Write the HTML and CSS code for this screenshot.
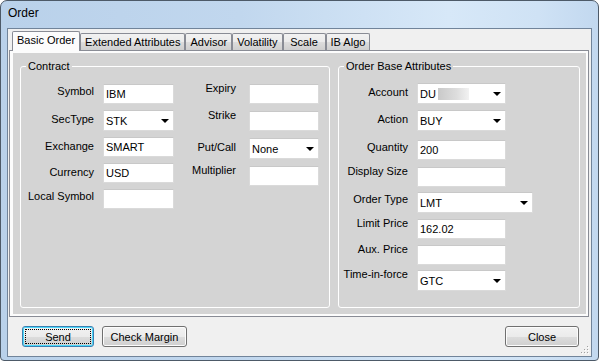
FILE: index.html
```html
<!DOCTYPE html>
<html lang="en">
<head>
  <meta charset="UTF-8">
  <title>Order</title>
  <link rel="stylesheet" href="styles.css">
</head>
<body>

  <div class="window">
    <div class="titlebar">Order</div>

    <div class="client">
      <div class="tabs">
        <div class="tab active">Basic Order</div>
        <div class="tab">Extended Attributes</div>
        <div class="tab">Advisor</div>
        <div class="tab">Volatility</div>
        <div class="tab">Scale</div>
        <div class="tab">IB Algo</div>
      </div>

      <div class="page">
        <div class="panel">

          <fieldset class="group contract">
            <legend>Contract</legend>
            <div class="contract-body">
              <div class="col-a">
                <div class="lbl">Symbol</div>
                <div class="box">IBM</div>
                <div class="lbl low">SecType</div>
                <div class="box combo">STK</div>
                <div class="lbl low">Exchange</div>
                <div class="box">SMART</div>
                <div class="lbl low">Currency</div>
                <div class="box">USD</div>
                <div class="lbl">Local Symbol</div>
                <div class="box"></div>
              </div>
              <div class="col-b">
                <div class="lbl high">Expiry</div>
                <div class="box"></div>
                <div class="lbl high">Strike</div>
                <div class="box"></div>
                <div class="lbl low">Put/Call</div>
                <div class="box combo">None</div>
                <div class="lbl high">Multiplier</div>
                <div class="box"></div>
              </div>
            </div>
          </fieldset>

          <fieldset class="group order-base">
            <legend>Order Base Attributes</legend>
            <div class="ob-body">
              <div class="lbl low">Account</div>
              <div class="box combo short"><span>DU<span class="redacted"></span></span></div>
              <div class="lbl low">Action</div>
              <div class="box combo short">BUY</div>
              <div class="lbl">Quantity</div>
              <div class="box short">200</div>
              <div class="lbl high">Display Size</div>
              <div class="box short"></div>
              <div class="lbl">Order Type</div>
              <div class="box combo">LMT</div>
              <div class="lbl high">Limit Price</div>
              <div class="box short">162.02</div>
              <div class="lbl high">Aux. Price</div>
              <div class="box short"></div>
              <div class="lbl high">Time-in-force</div>
              <div class="box combo short">GTC</div>
            </div>
          </fieldset>

        </div>
      </div>

      <div class="actions">
        <button class="btn send default">Send</button>
        <button class="btn check">Check Margin</button>
        <button class="btn close">Close</button>
      </div>

      <svg class="grip" width="10" height="10" viewBox="0 0 10 10">
        <rect x="8" y="2" width="1" height="1" fill="#fff"/>
        <rect x="7" y="1" width="1" height="1" fill="#a0a0a0"/>
        <rect x="8" y="5" width="1" height="1" fill="#fff"/>
        <rect x="7" y="4" width="1" height="1" fill="#a0a0a0"/>
        <rect x="5" y="5" width="1" height="1" fill="#fff"/>
        <rect x="4" y="4" width="1" height="1" fill="#a0a0a0"/>
        <rect x="8" y="8" width="1" height="1" fill="#fff"/>
        <rect x="7" y="7" width="1" height="1" fill="#a0a0a0"/>
        <rect x="5" y="8" width="1" height="1" fill="#fff"/>
        <rect x="4" y="7" width="1" height="1" fill="#a0a0a0"/>
        <rect x="2" y="8" width="1" height="1" fill="#fff"/>
        <rect x="1" y="7" width="1" height="1" fill="#a0a0a0"/>
      </svg>
    </div>
  </div>

</body>
</html>
```

FILE: styles.css
```css
* {
  margin: 0;
  padding: 0;
  box-sizing: border-box;
}

body {
  width: 599px;
  height: 361px;
  overflow: hidden;
  background: #fff;
  font-family: "Liberation Sans", Arial, sans-serif;
  font-size: 11px;
  color: #000;
}

/* window frame */
.window {
  width: 599px;
  height: 361px;
  border: 1px solid #4d5a68;
  border-radius: 7px 7px 4px 4px;
  background: linear-gradient(90deg, #b9d1ea 0%, #c1d7ee 40%, #d7e8f8 75%, #cfe2f5 90%, #c2d8ef 100%);
  display: flex;
  flex-direction: column;
  padding: 0 6px 3px;
}

.titlebar {
  height: 27px;
  padding: 5px 0 0 1px;
  font-size: 12px;
  line-height: 15px;
}

.client {
  flex: 1;
  position: relative;
  border: 1px solid #71849a;
  background: #f0f0f0;
  display: flex;
  flex-direction: column;
}

/* tabs */
.tabs {
  display: flex;
  align-items: flex-end;
  height: 21px;
  padding-left: 4px;
}

.tab {
  height: 17px;
  min-width: 43px;
  padding: 2px 4px 0;
  line-height: 13px;
  text-align: center;
  white-space: nowrap;
  border: 1px solid #898c95;
  border-bottom: none;
  border-radius: 2px 2px 0 0;
  background: linear-gradient(#f2f2f2, #ebebeb 50%, #dddddd 50%, #cfcfcf);
}

.tab.active {
  height: 20px;
  margin-bottom: -1px;
  position: relative;
  z-index: 1;
  background: #fcfcfc;
}

.page {
  margin-left: 1px;
  width: 580px;
  height: 267px;
  border: 1px solid #898c95;
  background: #fcfcfc;
  padding: 2px 2px 2px 3px;
}

.panel {
  height: 100%;
  background: #d4d4d4;
  display: flex;
  gap: 8px;
  padding: 7px 6px 6px 7px;
}

/* group boxes */
.group {
  border: 1px solid #fff;
  border-radius: 3px;
  min-width: 0;
}

.group legend {
  margin-left: 5px;
  padding: 0 2px;
  line-height: 13px;
}

.contract {
  width: 310px;
}

.order-base {
  flex: 1;
}

.contract-body {
  display: flex;
  padding-top: 11px;
}

.col-a {
  display: grid;
  grid-template-columns: 73px 71px;
  grid-template-rows: 26px 27px 26px 26px 20px;
  column-gap: 9px;
}

.col-b {
  display: grid;
  grid-template-columns: 62px 70px;
  grid-template-rows: 27px 27px 28px 20px;
  column-gap: 13px;
}

.ob-body {
  display: grid;
  padding-top: 10px;
  grid-template-columns: 69px 116px;
  grid-template-rows: 27px 30px 27px 25px 27px 26px 25px 21px;
  column-gap: 9px;
}

.lbl {
  text-align: right;
  white-space: nowrap;
  line-height: 13px;
  padding-top: 1px;
}

.lbl.low {
  padding-top: 3px;
}

.lbl.high {
  padding-top: 0;
  margin-top: -2px;
}

/* text boxes and combos */
.box {
  height: 20px;
  border: 1px solid #dadada;
  border-top-color: #c8c8c8;
  background: #fff;
  padding: 1px 2px 0;
  display: flex;
  align-items: center;
  line-height: 13px;
  white-space: nowrap;
}

.box.short {
  width: 89px;
}

.combo {
  height: 21px;
  justify-content: space-between;
}

.combo::after {
  content: "";
  border-left: 4px solid transparent;
  border-right: 4px solid transparent;
  border-top: 4px solid #000;
  margin-right: 2px;
}

.redacted {
  display: inline-block;
  width: 31px;
  height: 12px;
  margin-left: 2px;
  vertical-align: -2px;
  background: linear-gradient(90deg, #c9c9c9, #dddddd 60%, #f2f2f2);
}

/* bottom buttons */
.actions {
  display: flex;
  gap: 8px;
  margin-top: 9px;
  padding: 0 12px 0 14px;
}

.btn {
  height: 21px;
  font: inherit;
  color: #000;
  border: 1px solid #707070;
  border-radius: 3px;
  background: linear-gradient(#f2f2f2, #ebebeb 50%, #dddddd 50%, #cfcfcf);
  box-shadow: inset 0 0 0 1px #fcfcfc;
}

.btn.default {
  border-color: #3c7fb1;
  box-shadow: inset 0 0 0 1px #48d8fb;
  outline: 1px dotted #000;
  outline-offset: -4px;
}

.send {
  width: 72px;
}

.check {
  width: 85px;
}

.close {
  width: 74px;
  margin-left: auto;
}

.grip {
  position: absolute;
  right: 1px;
  bottom: 1px;
}
```
